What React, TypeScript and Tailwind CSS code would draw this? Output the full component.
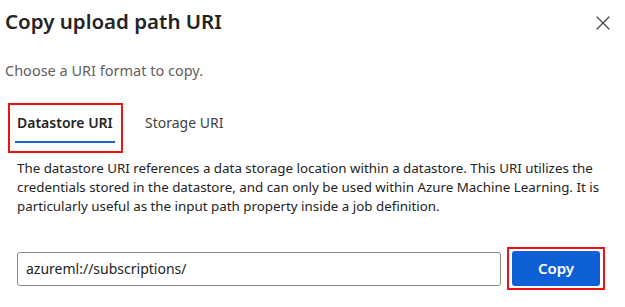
import React from "react";

export default function App() {
  return (
    <div
      className="w-[625px] h-[307px] bg-white text-[#242424] overflow-hidden"
      style={{ fontFamily: '"Noto Sans", "Open Sans", sans-serif' }}
    >
      <div className="flex items-start justify-between pl-[5px] pr-[14px] pt-[6px]">
        <h1 className="text-[20.5px] leading-[30px] font-semibold">Copy upload path URI</h1>
        <button className="mt-[9px] w-[16px] h-[16px] flex items-center justify-center text-[#424242]">
          <svg width="14" height="14" viewBox="0 0 14 14" fill="none">
            <path d="M1 1L13 13M13 1L1 13" stroke="#424242" strokeWidth="1.2" strokeLinecap="round" />
          </svg>
        </button>
      </div>
      <p className="pl-[5px] mt-[24px] text-[14.5px] leading-[20px] text-[#616161]">Choose a URI format to copy.</p>
      <div className="flex items-start pl-[8px] mt-[23px]">
        <div className="w-[115px] h-[50px] border-2 border-[#ee1111] pl-[5px] pt-[7px]">
          <div className="w-[100px] pl-[2px] pb-[7px] border-b-2 border-[#1a62d8] text-[14px] leading-[22px] font-semibold text-[#242424]">
            Datastore URI
          </div>
        </div>
        <div className="ml-[22px] pt-[9px] text-[14px] leading-[22px] text-[#424242]">Storage URI</div>
      </div>
      <p className="pl-[17px] mt-[6px] text-[13.35px] leading-[19px] text-[#242424] whitespace-nowrap">
        The datastore URI references a data storage location within a datastore. This URI utilizes the
        <br />
        credentials stored in the datastore, and can only be used within Azure Machine Learning. It is
        <br />
        particularly useful as the input path property inside a job definition.
      </p>
      <div className="flex items-center pl-[17px] mt-[31px]">
        <div className="w-[484px] h-[34px] border border-[#8a8a8a] rounded-[3px] flex items-center pl-[8px] text-[14px] text-[#242424]">
          azureml://subscriptions/
        </div>
        <div className="ml-[6px] border-2 border-[#ee1111] px-[3px] py-[2px]">
          <button className="w-[88px] h-[35px] bg-[#0f5fd6] rounded-[3px] text-white text-[15px] font-semibold">
            Copy
          </button>
        </div>
      </div>
    </div>
  );
}
